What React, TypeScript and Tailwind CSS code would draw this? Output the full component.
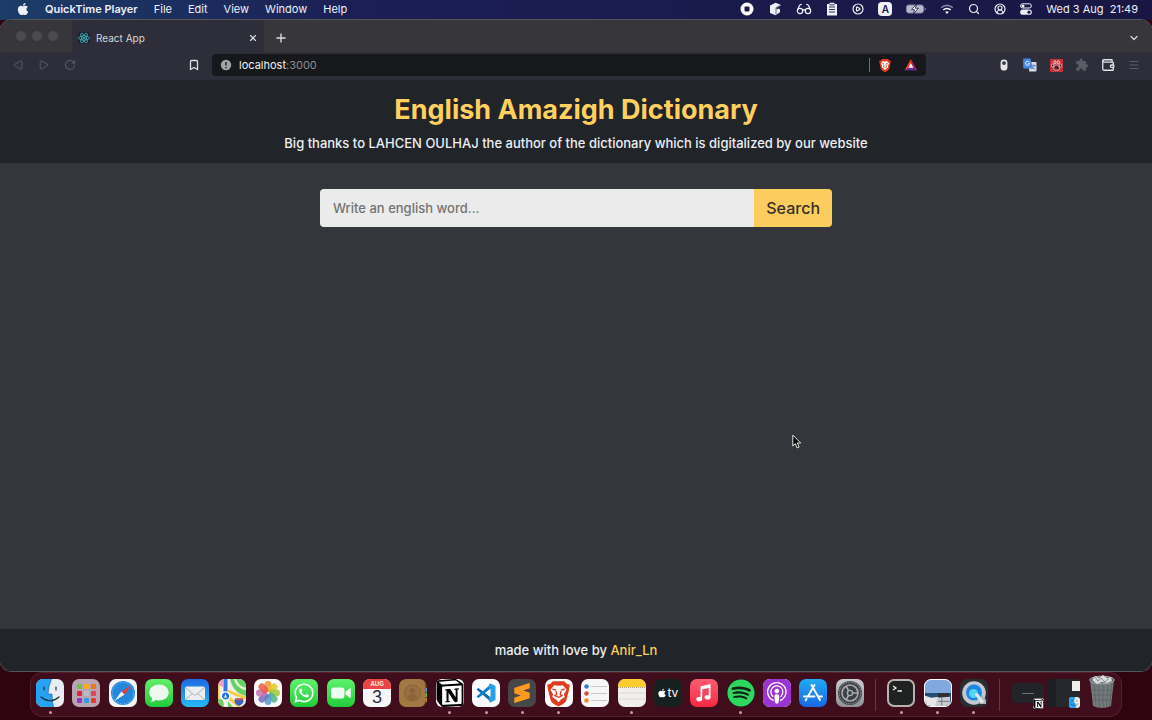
import { useState } from 'react';
import type { FormEvent, ReactNode } from 'react';
import {
  Bookmark,
  ChevronDown,
  CirclePlay,
  CircleUserRound,
  Glasses,
  Menu,
  Plus,
  RotateCw,
  Search,
  Triangle,
  Wallet,
  X,
} from 'lucide-react';
import { FaApple, FaSpotify, FaWhatsapp } from 'react-icons/fa';
import { MdExtension } from 'react-icons/md';
import { SiNotion, SiSublimetext, SiApplepodcasts } from 'react-icons/si';

const MENUS = ['File', 'Edit', 'View', 'Window', 'Help'];

function ReactLogo() {
  return (
    <svg viewBox="0 0 24 24" className="w-3 h-3 rounded-sm bg-[#1b2026]" fill="none" stroke="#4fc4d8" strokeWidth="1.4">
      <ellipse cx="12" cy="12" rx="11" ry="4.3" />
      <ellipse cx="12" cy="12" rx="11" ry="4.3" transform="rotate(60 12 12)" />
      <ellipse cx="12" cy="12" rx="11" ry="4.3" transform="rotate(120 12 12)" />
      <circle cx="12" cy="12" r="2" fill="#4fc4d8" stroke="none" />
    </svg>
  );
}

function MenuBar() {
  return (
    <header className="flex h-5 shrink-0 items-center justify-between bg-gradient-to-r from-[#1b3d68] via-[#1b1f55] via-30% to-[#191643] pb-0.5 pl-[17px] pr-[14px] text-[11px] leading-4 text-[#eef0f6]">
      <nav className="flex items-center gap-4">
        <button aria-label="Apple menu"><FaApple className="w-3 h-3.5" /></button>
        <button className="font-semibold">QuickTime Player</button>
        {MENUS.map((m) => (
          <button key={m}>{m}</button>
        ))}
      </nav>

      <div className="flex items-center gap-3.5">
        {/* Stop recording */}
        <svg viewBox="0 0 14 14" className="w-3.5 h-3.5">
          <circle cx="7" cy="7" r="6.5" fill="#fff" />
          <rect x="4.5" y="4.5" width="5" height="5" rx="1" fill="#191643" />
        </svg>
        <svg viewBox="0 0 14 14" className="w-3.5 h-3.5">
          <path d="M2 3.6 7.6.8l4.9 2v1L8.6 5.9v1.7l2.2-1.1 1.2 1v2.8l-4.4 3L2 11z" fill="#eef0f6" />
          <path d="M12 3.6 8 5.6v7" fill="none" stroke="#191643" strokeWidth=".6" />
        </svg>
        <Glasses className="w-4 h-4" strokeWidth={1.8} />
        <svg viewBox="0 0 12 14" className="w-3 h-3.5">
          <path d="M1 2h2.5V.8h5V2H11v11.5H1z" fill="#eef0f6" />
          <path d="M3 5h6M3 7.5h6M3 10h6M3.5 2.8h5" stroke="#191643" strokeWidth=".9" />
        </svg>
        <CirclePlay className="w-3 h-3" strokeWidth={2.4} />
        <span className="flex h-3.5 w-3.5 items-center justify-center rounded-sm bg-[#eef0f6] text-[10px] font-semibold text-[#191643]">A</span>
        <svg viewBox="0 0 20 10" className="h-2.5 w-5">
          <rect x=".5" y="1" width="17" height="8" rx="2.3" fill="#b8b8cb" stroke="#8583a2" />
          <path d="M18.7 3.5v3q1-.4 1-1.5t-1-1.5" fill="#a5a3bc" />
          <path d="m10.6.2-5 5.5h3L7.4 9.8l5-5.5h-3z" fill="#fff" stroke="#191643" strokeWidth=".8" />
        </svg>
        <svg viewBox="0 0 16 12" className="h-3 w-3.5" fill="none" strokeWidth="1.8">
          <path d="M1.4 4.6a9.3 9.3 0 0 1 13.2 0" stroke="#85839f" />
          <path d="M3.8 7.2a6 6 0 0 1 8.4 0" stroke="#fff" />
          <path d="m8 11.6-2-2.1a3 3 0 0 1 4 0z" fill="#fff" />
        </svg>
        <Search className="w-3 h-3" strokeWidth={2.4} />
        <CircleUserRound className="w-3 h-3" strokeWidth={2.4} />
        <svg viewBox="0 0 12 12" className="w-3 h-3">
          <rect x=".6" y=".8" width="10.8" height="4.2" rx="2.1" fill="none" stroke="#eef0f6" />
          <circle cx="3" cy="2.9" r="1.5" fill="#eef0f6" />
          <rect x=".2" y="6.6" width="11.6" height="5.2" rx="2.6" fill="#eef0f6" />
          <circle cx="9" cy="9.2" r="1.6" fill="#191643" />
        </svg>
        <time className="whitespace-pre">Wed 3 Aug  21:49</time>
      </div>
    </header>
  );
}

function TabStrip() {
  return (
    <div className="flex h-8 shrink-0 items-center bg-[#37363b] pl-4 pr-3">
      <div className="flex w-14 gap-[6px]">
        <span className="h-2.5 w-2.5 rounded-full bg-[#4b4a4f]" />
        <span className="h-2.5 w-2.5 rounded-full bg-[#4b4a4f]" />
        <span className="h-2.5 w-2.5 rounded-full bg-[#4b4a4f]" />
      </div>
      <div className="flex h-full w-48 items-center gap-1.5 rounded-t bg-[#2d2e39] px-1.5 pt-1">
        <ReactLogo />
        <span className="flex-1 text-[10px] text-[#d5d6db]">React App</span>
        <button aria-label="Close tab"><X className="w-2.5 h-2.5 text-[#dcdce0]" strokeWidth={2.8} /></button>
      </div>
      <button aria-label="New tab" className="ml-2.5 pt-1"><Plus className="w-3.5 h-3.5 text-[#dcdce0]" strokeWidth={2.4} /></button>
      <button aria-label="Search tabs" className="ml-auto pt-1"><ChevronDown className="w-3 h-3 text-[#dcdce0]" strokeWidth={2.4} /></button>
    </div>
  );
}

function ToolButton({ label, children }: { label: string; children: ReactNode }) {
  return (
    <button aria-label={label} className="flex w-6 items-center justify-center">
      {children}
    </button>
  );
}

function Toolbar() {
  return (
    <div className="flex h-7 shrink-0 items-center bg-[#2d2e39] px-1.5 pb-0.5">
      <div className="flex gap-0.5 text-[#5a5b65]">
        <ToolButton label="Back"><Triangle className="w-2.5 h-2.5 -rotate-90" strokeWidth={2.4} /></ToolButton>
        <ToolButton label="Forward"><Triangle className="w-2.5 h-2.5 rotate-90" strokeWidth={2.4} /></ToolButton>
        <ToolButton label="Reload"><RotateCw className="w-3 h-3" strokeWidth={2.2} /></ToolButton>
      </div>
      <button aria-label="Bookmark" className="ml-[106px] mr-3"><Bookmark className="w-3 h-3 text-[#dfdfe4]" strokeWidth={2.6} /></button>

      <div className="mr-[66px] flex h-[22px] flex-1 items-center rounded-sm bg-[#17181c] px-2">
        <svg viewBox="0 0 12 12" className="w-3 h-3">
          <circle cx="6" cy="6" r="5.2" fill="#a3a4a8" />
          <path d="M6 3v3.6M6 8v1.2" stroke="#17181c" strokeWidth="1.4" />
        </svg>
        <div className="ml-[7px] flex-1 text-[11px] text-[#8b8c91]">
          <span className="text-[#f2f2f4]">localhost</span>:3000
        </div>
        <span className="h-3.5 w-px bg-[#68726c]" />
        <button aria-label="Brave Shields" className="ml-2"><BraveLion className="h-[15px] w-3.5" /></button>
        <button aria-label="Brave Rewards" className="ml-3">
          <svg viewBox="0 0 14 13" className="h-3 w-3.5">
            <path d="M7 0 0 12.5l7-4.3z" fill="#ff4724" />
            <path d="m7 0 7 12.5-7-4.3z" fill="#9e1f63" />
            <path d="M0 12.5h14L7 8.2z" fill="#662d91" />
            <path d="M7 4.7 4.3 9.5h5.4z" fill="#fff" />
          </svg>
        </button>
      </div>

      <div className="flex items-center gap-0.5">
        <ToolButton label="Dark mode">
          <svg viewBox="0 0 10 14" className="h-3 w-2.5">
            <rect x="1" y=".5" width="8" height="13" rx="4" fill="#e6e6ea" />
            <circle cx="5" cy="4.8" r="2.3" fill="#3b3c46" />
          </svg>
        </ToolButton>
        <ToolButton label="Translate">
          <svg viewBox="0 0 14 14" className="h-3.5 w-3.5">
            <rect x="6" y="4" width="7.5" height="9.5" rx="1" fill="#d9dbe0" />
            <path d="M8 7.5h5M10.4 6.3v1.2M12 7.5q-.8 2.3-3.5 3.8M9 8.4q1 2 3 3" stroke="#5c7fbd" strokeWidth=".8" fill="none" />
            <path d="M1 .5h6.5L10 10.5H1q-.8 0-.8-.8V1.3Q.2.5 1 .5z" fill="#4a86e8" />
            <path d="M6.2 4.2a2 2 0 1 0 .3 1.5H4.8" stroke="#fff" strokeWidth=".9" fill="none" />
          </svg>
        </ToolButton>
        <ToolButton label="Paw extension">
          <svg viewBox="0 0 14 14" className="h-[13px] w-[13px]">
            <rect width="14" height="14" rx="1" fill="#c8323c" />
            <ellipse cx="2.8" cy="7" rx="1.2" ry="1.6" fill="#2c1116" stroke="#fff" strokeWidth=".7" />
            <ellipse cx="5.3" cy="3.6" rx="1.2" ry="1.7" fill="#c8323c" stroke="#fff" strokeWidth=".8" />
            <ellipse cx="9" cy="3.6" rx="1.2" ry="1.7" fill="#c8323c" stroke="#fff" strokeWidth=".8" />
            <ellipse cx="11.4" cy="7" rx="1.2" ry="1.6" fill="#2c1116" stroke="#fff" strokeWidth=".7" />
            <path d="M7.100 6.500c1.700 0 3.300 2.200 3 4s-1.800 1.300-3 1.300-2.700.5-3-1.300 1.300-4 3-4z" fill="#5e1620" stroke="#fff" strokeWidth=".7" />
          </svg>
        </ToolButton>
        <ToolButton label="Extensions"><MdExtension className="h-3.5 w-3.5 text-[#5a5b65]" /></ToolButton>
        <ToolButton label="Wallet"><Wallet className="h-3.5 w-3.5 text-[#e6e6ea]" strokeWidth={2.2} /></ToolButton>
        <ToolButton label="Menu"><Menu className="h-3.5 w-3 text-[#5a5b65]" strokeWidth={2} /></ToolButton>
      </div>
    </div>
  );
}

function BraveLion({ className }: { className: string }) {
  return (
    <svg viewBox="0 0 24 24" className={className}>
      <path d="M7 1h10l2.5 2.5L22 4l-.5 4L19 18q-1 3-7 5.5Q6 21 5 18L2.5 8 2 4l2.5-.5z" fill="#e23a1c" />
      <path d="M12 5.2 8.2 4.6 4.8 8.6l2.4 4-.8 2.6 3.4 2.2L12 19.800l2.2-2.400 3.400-2.200-.8-2.600 2.400-4-3.400-4z" fill="#fff" />
      <path d="m6.600 8.200 3.400.8M17.400 8.200 14 9M9.800 9.800l.6 3.200-1.600 1 3.200 1.400 3.200-1.400-1.600-1 .6-3.200" fill="none" stroke="#e23a1c" strokeWidth="1.2" />
    </svg>
  );
}

function DictionaryPage() {
  const [word, setWord] = useState('');

  const handleSubmit = (e: FormEvent) => {
    e.preventDefault();
  };

  return (
    <div className="flex min-h-0 flex-1 flex-col bg-[#33363b] font-medium">
      <header className="shrink-0 bg-[#212429] pt-3 pb-[10px] text-center">
        <h1 className="text-[27px] leading-9 font-bold text-[#ffd05e]">English Amazigh Dictionary</h1>
        <p className="mt-[5px] text-[13px] leading-5 text-[#eceff3]">
          Big thanks to LAHCEN OULHAJ the author of the dictionary which is digitalized by our website
        </p>
      </header>

      <main className="flex-1 px-4 pt-[26px]">
        <form onSubmit={handleSubmit} className="mx-auto flex h-[38px] max-w-lg overflow-hidden rounded">
          <input
            type="text"
            aria-label="English word"
            value={word}
            onChange={(e) => setWord(e.target.value)}
            placeholder="Write an english word..."
            className="min-w-0 flex-1 bg-[#ebebeb] px-[13px] pt-0.5 text-[13px] text-[#212429] outline-none placeholder:text-[#737373]"
          />
          <button type="submit" className="bg-[#fccc5c] px-3 text-base text-[#34302a]">Search</button>
        </form>
      </main>

      <footer className="shrink-0 bg-[#212429] py-[11px] text-center text-[13px] leading-5 text-[#eceff3]">
        made with love by <a href="#anir" className="text-[#f8cf5c]">Anir_Ln</a>
      </footer>
    </div>
  );
}

const TILE = 'flex h-[28px] w-[28px] items-center justify-center overflow-hidden rounded-[7px]';

function FinderArt() {
  return (
    <svg viewBox="0 0 28 28" className="h-full w-full">
      <rect width="28" height="28" fill="#e8edf3" />
      <path d="M0 0h15.5q-3 7-3.5 15h4q0 7 1.5 13H0z" fill="#25a3f2" />
      <path d="M15.5 0q-3 7-3.5 15h4q0 7 1.5 13" fill="none" stroke="#1b5b93" strokeWidth=".6" />
      <path d="M8 8v3M20 8v3M5 18q9 7.5 18 0" fill="none" stroke="#1c2f45" strokeWidth="1.2" strokeLinecap="round" />
    </svg>
  );
}

const LAUNCHPAD_COLORS = ['#6cc24a', '#f7a928', '#f0731f', '#d8273e', '#b9bcc4', '#e8415b', '#8f35c8', '#2f9be8', '#e93b2d'];
const PETALS = ['#f59b2c', '#e6c72e', '#a3c83f', '#56b487', '#5a9bd5', '#7a70c4', '#c276b4', '#ec5b50'];

type DockItem = { name: string; running?: boolean; art: ReactNode };

const APPS: DockItem[] = [
  { name: 'Finder', running: true, art: <div className={TILE}><FinderArt /></div> },
  {
    name: 'Launchpad',
    art: (
      <div className={`${TILE} bg-[#b9a5b2]`}>
        <div className="grid grid-cols-3 gap-0.5">
          {LAUNCHPAD_COLORS.map((c) => (
            <span key={c} className="h-[5px] w-[5px] rounded-[1px]" style={{ background: c }} />
          ))}
        </div>
      </div>
    ),
  },
  {
    name: 'Safari',
    art: (
      <div className={`${TILE} bg-[#f4f5f7]`}>
        <svg viewBox="0 0 28 28" className="h-full w-full">
          <circle cx="14" cy="14" r="12" fill="#2387dc" />
          <circle cx="14" cy="14" r="10.8" fill="none" stroke="#a8d3f6" strokeWidth="1.2" strokeDasharray=".5 1.4" />
          <path d="M22.5 6 12.4 12.4l3.2 3.2z" fill="#ec3b34" />
          <path d="m5.5 22 6.9-9.6 3.2 3.2z" fill="#f2f2f4" />
        </svg>
      </div>
    ),
  },
  {
    name: 'Messages',
    art: (
      <div className={`${TILE} bg-gradient-to-b from-[#61ee6a] to-[#20cb3d]`}>
        <svg viewBox="0 0 28 28" className="h-full w-full">
          <ellipse cx="14" cy="13.5" rx="9.8" ry="8" fill="#eefaf0" />
          <path d="M7.5 18q.3 3-2 4.8 4.2 0 6-2.5z" fill="#eefaf0" />
        </svg>
      </div>
    ),
  },
  {
    name: 'Mail',
    art: (
      <div className={`${TILE} bg-gradient-to-b from-[#2069e2] to-[#27baf5]`}>
        <svg viewBox="0 0 28 28" className="h-full w-full">
          <rect x="4" y="7.5" width="20" height="13.5" rx="1.8" fill="#eceef0" />
          <path d="m4.5 8.5 8 7q1.5 1.2 3 0l8-7M4.5 20.5l7-6M23.5 20.5l-7-6" fill="none" stroke="#9da4ab" strokeWidth=".8" />
        </svg>
      </div>
    ),
  },
  {
    name: 'Maps',
    art: (
      <div className={TILE}>
        <svg viewBox="0 0 28 28" className="h-full w-full">
          <rect width="28" height="28" fill="#f2f0e8" />
          <path d="M12 0h16v17Q15 14 12 0z" fill="#66d163" />
          <path d="M17 0q2 8 11 10" stroke="#d9f5cf" strokeWidth="2.5" fill="none" />
          <path d="M0 0h5v8L0 6z" fill="#f1a2b4" />
          <path d="M0 7v21M10 12q8 4 18 7M10 18l14 12" stroke="#f5cd45" strokeWidth="3" fill="none" />
          <path d="M0 20q6-2 6 8H0zM10 22l5 6h-5z" fill="#6fcf67" />
          <path d="M7.5 0v16" stroke="#2f7ce0" strokeWidth="4" />
          <circle cx="7.5" cy="17" r="4.2" fill="#2378e8" stroke="#fff" strokeWidth="1.3" />
          <path d="m6 19 1.5-4L9 19l-1.5-.8z" fill="#fff" />
          <path d="M17 19.5h8q2 5-4 7.5-6-2.5-4-7.5z" fill="#3565c3" />
          <path d="M17 19.5h8v1.8h-8z" fill="#e24b4b" />
        </svg>
      </div>
    ),
  },
  {
    name: 'Photos',
    art: (
      <div className={`${TILE} bg-[#f8f8f8]`}>
        <svg viewBox="0 0 28 28" className="h-full w-full">
          {PETALS.map((c, i) => (
            <rect key={c} x="10.6" y="2" width="6.8" height="11" rx="3.4" fill={c} opacity=".88" transform={`rotate(${i * 45} 14 14)`} />
          ))}
        </svg>
      </div>
    ),
  },
  { name: 'WhatsApp', art: <div className={`${TILE} bg-gradient-to-b from-[#5df26e] to-[#1bcc38]`}><FaWhatsapp className="h-[22px] w-[22px] text-white" /></div> },
  {
    name: 'FaceTime',
    art: (
      <div className={`${TILE} bg-gradient-to-b from-[#5df26e] to-[#1fcb3a]`}>
        <svg viewBox="0 0 28 28" className="h-full w-full">
          <rect x="4" y="8.5" width="13.5" height="11" rx="2.8" fill="#effaf1" />
          <path d="m18.5 12.5 4.5-3.3q.8-.4.8.6v8.4q0 1-.8.6l-4.5-3.3z" fill="#effaf1" />
        </svg>
      </div>
    ),
  },
  {
    name: 'Calendar',
    art: (
      <div className={`${TILE} flex-col bg-[#f7f7f7]`}>
        <span className="h-[10px] w-full bg-[#ec4343] text-center text-[6px] leading-[10px] font-semibold text-white">AUG</span>
        <span className="flex-1 text-[17px] leading-[17px] text-[#2c2c2e]">3</span>
      </div>
    ),
  },
  {
    name: 'Contacts',
    art: (
      <div className={TILE}>
        <svg viewBox="0 0 28 28" className="h-full w-full">
          <rect width="28" height="28" fill="#4b3524" />
          <rect width="26.5" height="28" rx="6" fill="#a17743" />
          <path d="M27.3 9v4" stroke="#4e9bd8" strokeWidth="1.4" />
          <path d="M27.3 14v4" stroke="#6cc24a" strokeWidth="1.4" />
          <path d="M27.3 19v4" stroke="#e48a2c" strokeWidth="1.4" />
          <circle cx="13.5" cy="14" r="8" fill="#997040" stroke="#8a6336" />
          <circle cx="13.5" cy="11.8" r="2.8" fill="#8a6336" />
          <path d="M8.5 19q1-4 5-4t5 4q-5 4-10 0z" fill="#8a6336" />
        </svg>
      </div>
    ),
  },
  { name: 'Notion', running: true, art: <SiNotion className="h-[28px] w-[28px] rounded-md bg-white text-black" /> },
  {
    name: 'Visual Studio Code',
    running: true,
    art: (
      <div className={`${TILE} bg-white`}>
        <svg viewBox="0 0 28 28" className="h-full w-full">
          <path d="m4.5 10.5 2-1.5L19 18.5V23z" fill="#1070b3" />
          <path d="m4.500 17.500 2 1.500L19 9.500V5z" fill="#0e80cc" />
          <path d="M18.5 4.5 23.5 7v14l-5 2.5-1.5-1v-17z" fill="#2b9fe6" />
          <path d="M18.5 10v8L13.300 14z" fill="#fff" />
        </svg>
      </div>
    ),
  },
  { name: 'Sublime Text', running: true, art: <div className={`${TILE} bg-[#474747]`}><SiSublimetext className="h-5 w-5 text-[#ff9a1f]" /></div> },
  { name: 'Brave', running: true, art: <div className={`${TILE} bg-white`}><BraveLion className="h-[27px] w-[27px]" /></div> },
  {
    name: 'Reminders',
    art: (
      <div className={`${TILE} bg-[#f7f7f7]`}>
        <svg viewBox="0 0 28 28" className="h-full w-full">
          <circle cx="5.5" cy="7.5" r="2.2" fill="#3379e2" />
          <circle cx="5.5" cy="14.5" r="2.2" fill="#e04a43" />
          <circle cx="5.5" cy="21.5" r="2.2" fill="#ee8a32" />
          <path d="M10 7.5h16M10 14.5h16M10 21.5h16" stroke="#c9c9cb" />
        </svg>
      </div>
    ),
  },
  {
    name: 'Notes',
    running: true,
    art: (
      <div className={`${TILE} bg-[#f0efec]`}>
        <svg viewBox="0 0 28 28" className="h-full w-full">
          <rect width="28" height="8" fill="#facc2e" />
          <path d="M0 8.5h28" stroke="#a89f83" strokeDasharray="1 1" />
          <path d="M0 14h28M0 20h28" stroke="#d6d5d1" strokeWidth=".8" />
        </svg>
      </div>
    ),
  },
  {
    name: 'Apple TV',
    art: (
      <div className={`${TILE} bg-[#16201e] text-white`}>
        <FaApple className="h-2.5 w-2.5" />
        <span className="text-[12px] leading-3">tv</span>
      </div>
    ),
  },
  {
    name: 'Music',
    art: (
      <div className={`${TILE} bg-gradient-to-b from-[#fb5a72] to-[#f8243f]`}>
        <svg viewBox="0 0 28 28" className="h-full w-full" fill="#fff">
          <path d="M10.5 7.5 20.500 5v3.600l-8.300 2v9h-1.700z" />
          <path d="M18.800 8h1.700v10h-1.700z" />
          <ellipse cx="9.300" cy="20" rx="3" ry="2.3" />
          <ellipse cx="17.600" cy="18.2" rx="3" ry="2.3" />
        </svg>
      </div>
    ),
  },
  { name: 'Spotify', running: true, art: <div className="rounded-full bg-[#142017]"><FaSpotify className="h-[28px] w-[28px] text-[#2ed860]" /></div> },
  { name: 'Podcasts', art: <div className={`${TILE} bg-white`}><SiApplepodcasts className="h-[28px] w-[28px] text-[#9a35d3]" /></div> },
  {
    name: 'App Store',
    art: (
      <div className={`${TILE} bg-gradient-to-b from-[#21aaf6] to-[#1b67e4]`}>
        <svg viewBox="0 0 28 28" className="h-full w-full" fill="none" stroke="#fff" strokeWidth="2" strokeLinecap="round">
          <path d="m12.5 6 8.5 15M15.5 6 9 17.3M7.5 20l-.8 1.300M5 17.500h10.500M19.500 17.500H23" />
        </svg>
      </div>
    ),
  },
  {
    name: 'System Preferences',
    art: (
      <div className={`${TILE} bg-gradient-to-b from-[#cbccd1] to-[#8f9197]`}>
        <svg viewBox="0 0 28 28" className="h-full w-full" fill="none">
          <circle cx="14" cy="14" r="12" fill="#3c3f44" />
          <circle cx="14" cy="14" r="10.8" stroke="#8d9095" strokeWidth="1.2" strokeDasharray="1 .8" />
          <circle cx="14" cy="14" r="8" stroke="#a9abb0" strokeWidth="1.6" />
          <circle cx="14" cy="14" r="2.6" stroke="#a9abb0" strokeWidth="1.4" />
          <path d="M16.5 14H22M12.7 11.8 10 7M12.7 16.2 10 21" stroke="#a9abb0" strokeWidth="1.6" />
        </svg>
      </div>
    ),
  },
];

const UTILITIES: DockItem[] = [
  {
    name: 'Terminal',
    running: true,
    art: (
      <div className={`${TILE} border-2 border-[#b7b3b1] bg-[#202222]`}>
        <svg viewBox="0 0 24 24" className="h-full w-full" fill="none" stroke="#f2f2f2" strokeWidth="1.3">
          <path d="m4 5 3 2-3 2M8.5 10H13" />
        </svg>
      </div>
    ),
  },
  {
    name: 'Preview',
    running: true,
    art: (
      <div className={`${TILE} border border-white bg-white`}>
        <svg viewBox="0 0 28 28" className="h-full w-full">
          <rect width="28" height="28" rx="5" fill="#7fa9df" />
          <path d="M0 14h28v14H0z" fill="#244b74" />
          <path d="m0 17 7 2 8-1v10H0z" fill="#e5e6e8" />
          <path d="M14 14h12v5H14z" fill="#2b2f38" />
          <path d="m13 19 14-1v10H11z" fill="#c8cbd0" />
          <path d="M18 19v8M14 23h12" stroke="#6d737b" />
        </svg>
      </div>
    ),
  },
  {
    name: 'QuickTime Player',
    running: true,
    art: (
      <div className={`${TILE} bg-[#2b2c31]`}>
        <svg viewBox="0 0 28 28" className="h-full w-full">
          <circle cx="14" cy="14" r="11.8" fill="#c3c8d0" />
          <path d="M15 15h6l5 6v4h-6z" fill="#aeb4bd" />
          <circle cx="14" cy="13.5" r="8" fill="#1b87e5" />
          <circle cx="13.5" cy="14.500" r="4.5" fill="#55d3f7" />
          <path d="m14.500 15 3-1 7 9-4 1z" fill="#dfe3e9" />
        </svg>
      </div>
    ),
  },
];

function DockIcon({ item }: { item: DockItem }) {
  return (
    <button aria-label={item.name} className="flex flex-col items-center gap-1">
      {item.art}
      <span className={item.running ? 'h-[3px] w-[3px] rounded-full bg-[#c999a5]' : 'h-[3px] w-[3px]'} />
    </button>
  );
}

function Dock() {
  return (
    <footer className="shrink-0 px-[30px] pt-px pb-[3px]">
      <div className="flex h-[45px] items-start justify-between rounded-xl border border-[#57202e] bg-[#400d1c] px-[5px] pt-[6px]">
        {APPS.map((item) => <DockIcon key={item.name} item={item} />)}
        <span className="mx-[3px] h-8 w-px bg-[#6a3543]" />
        {UTILITIES.map((item) => <DockIcon key={item.name} item={item} />)}
        <span className="mx-[3px] h-8 w-px bg-[#6a3543]" />

        <div className="flex gap-1">
          {/* Minimized windows */}
          <button aria-label="Notion window" className="relative mt-1 h-5 w-8 rounded-sm bg-[#22242a]">
            <span className="mx-auto block h-px w-3 bg-[#6d7076]" />
            <SiNotion className="absolute -bottom-1.5 right-0 h-[11px] w-[11px] rounded-[3px] bg-white text-black" />
          </button>
          <button aria-label="Finder window" className="relative h-[28px] w-8 border-l-8 border-[#1b1e22] bg-[#25282d]">
            <span className="absolute right-0 top-0.5 h-[10px] w-2 bg-[#eeeeea]" />
            <span className="absolute -bottom-px right-0 h-[11px] w-[11px] overflow-hidden rounded-[3px]"><FinderArt /></span>
          </button>
          <button aria-label="Trash" className="-mt-1 ml-1">
            <svg viewBox="0 0 28 34" className="h-[34px] w-[28px]">
              <path d="m2 5 3 26q9 4 18 0l3-26z" fill="#74797b" />
              <path d="m6 9 2 22M10.5 10l1 22.5M15 10v23M20 10l-1.5 22M24 8l-2.5 23M4 15h20M4.5 20h19M5 25h18" stroke="#5c6264" strokeWidth=".8" />
              <ellipse cx="14" cy="5" rx="12.3" ry="3.8" fill="#565c60" stroke="#a7abad" />
              <path d="m4 5 3-4 4 2 4-3 4 3 4-1 1 4-5 2-5-1-5 2z" fill="#d8dadb" />
              <path d="m7 2 3 4 3-3 4 4 4-4" fill="none" stroke="#73787b" strokeWidth=".8" />
            </svg>
          </button>
        </div>
      </div>
    </footer>
  );
}

export default function App() {
  return (
    <div className="relative flex h-screen flex-col overflow-hidden bg-[#2f0410] font-['Inter',sans-serif]">
      <MenuBar />
      <section className="flex min-h-0 flex-1 flex-col overflow-hidden rounded-xl shadow-[0_0_0_1px_#53545c]">
        <TabStrip />
        <Toolbar />
        <DictionaryPage />
      </section>
      <Dock />

      {/* Mouse pointer */}
      <svg viewBox="0 0 10 15" className="pointer-events-none absolute left-[792px] top-[434px] h-[15px] w-2.5">
        <path d="M.8 1v11l2.5-2.3 1.8 4.2 2-.8-1.8-4.100h3.400z" fill="#0b0b0c" stroke="#e8e8e8" />
      </svg>
    </div>
  );
}
